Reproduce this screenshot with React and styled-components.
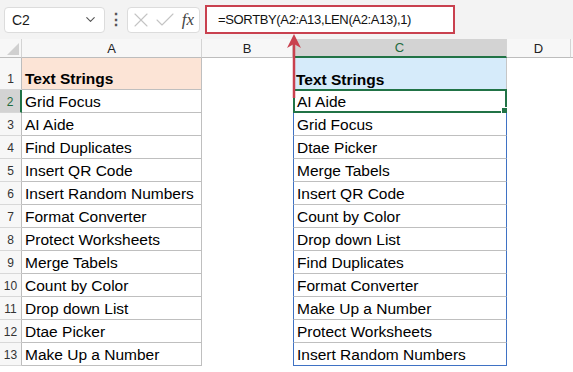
import styled, { createGlobalStyle } from 'styled-components';
import { ChevronDown, X, Check } from 'lucide-react';

const GlobalStyle = createGlobalStyle`
  html, body {
    margin: 0;
    padding: 0;
    background: #ffffff;
    font-family: 'Liberation Sans', Arial, sans-serif;
  }
  * { box-sizing: border-box; }
`;

const Page = styled.div`
  position: relative;
  width: 573px;
  height: 372px;
  overflow: hidden;
  background: #ffffff;
`;

const Toolbar = styled.div`
  display: flex;
  align-items: center;
  height: 39px;
  padding-left: 4px;
  background: #f3f3f3;
`;

const NameBox = styled.div`
  display: flex;
  align-items: center;
  justify-content: space-between;
  width: 101px;
  height: 26px;
  padding: 0 6px 0 7px;
  background: #ffffff;
  border: 1px solid #dcdcdc;
  border-radius: 4px;
  font-size: 14px;
  color: #1a1a1a;
`;

const Dots = styled.div`
  width: 22px;
  text-align: center;
  font-size: 16px;
  font-weight: 700;
  color: #555;
`;

const FxBox = styled.div`
  display: flex;
  align-items: center;
  gap: 0;
  width: 73px;
  height: 26px;
  padding: 0 5px 0 1px;
  background: #ffffff;
  border: 1px solid #dcdcdc;
  border-radius: 4px;
`;

const Fx = styled.span`
  margin-left: auto;
  font-family: 'Liberation Serif', serif;
  font-style: italic;
  font-size: 17px;
  color: #444;
`;

const FormulaBox = styled.div`
  display: flex;
  align-items: center;
  width: 250px;
  height: 29px;
  margin-left: 5px;
  padding-left: 11px;
  background: #ffffff;
  border: 2px solid #c9414f;
  font-size: 13px;
  letter-spacing: -0.35px;
  color: #111;
`;

const Sheet = styled.div`
  display: grid;
  grid-template-columns: 22px 180px 91px 214px 64px 1fr;
  grid-template-rows: 19px 32px repeat(13, 23px);
`;

const Corner = styled.div`
  position: relative;
  background: #f7f7f7;
  border-right: 1px solid #d4d4d4;
  border-bottom: 1px solid #bdbdbd;
  &::after {
    content: '';
    position: absolute;
    right: 2px;
    bottom: 2px;
    border-left: 12px solid transparent;
    border-bottom: 12px solid #d0d0d0;
  }
`;

const ColHead = styled.div`
  display: flex;
  align-items: center;
  justify-content: center;
  font-size: 13px;
  background: ${p => (p.$active ? '#d3d3d3' : '#f7f7f7')};
  color: ${p => (p.$active ? '#1e6b3e' : '#222')};
  border-right: 1px solid #d4d4d4;
  border-bottom: ${p => (p.$active ? '2px solid #217346' : '1px solid #bdbdbd')};
`;

const RowHead = styled.div`
  display: flex;
  align-items: flex-end;
  justify-content: center;
  padding-bottom: 3px;
  font-size: 12px;
  background: ${p => (p.$active ? '#d3d3d3' : '#f7f7f7')};
  color: ${p => (p.$active ? '#1e6b3e' : '#333')};
  border-bottom: 1px solid #d8d8d8;
  border-right: ${p => (p.$active ? '2px solid #217346' : '1px solid #bdbdbd')};
`;

const Cell = styled.div`
  position: relative;
  display: flex;
  align-items: flex-end;
  padding: 0 0 1px 3px;
  font-size: 15.5px;
  font-weight: ${p => (p.$bold ? 700 : 400)};
  color: #000;
  white-space: nowrap;
  background: ${p => p.$fill || '#ffffff'};
  border-right: ${p => p.$right || 'none'};
  border-bottom: ${p => p.$bottom || 'none'};
  border-left: ${p => p.$left || 'none'};
`;

const Selection = styled.div`
  position: absolute;
  inset: -1px -1px -1px -1px;
  border: 2px solid #217346;
  pointer-events: none;
  &::after {
    content: '';
    position: absolute;
    right: -4px;
    bottom: -4px;
    width: 6px;
    height: 6px;
    background: #217346;
    border: 1px solid #ffffff;
  }
`;

const Arrow = styled.svg`
  position: absolute;
  left: 286px;
  top: 32px;
`;

const listA = [
  'Grid Focus', 'AI Aide', 'Find Duplicates', 'Insert QR Code', 'Insert Random Numbers',
  'Format Converter', 'Protect Worksheets', 'Merge Tabels', 'Count by Color',
  'Drop down List', 'Dtae Picker', 'Make Up a Number',
];

const listC = [
  'AI Aide', 'Grid Focus', 'Dtae Picker', 'Merge Tabels', 'Insert QR Code', 'Count by Color',
  'Drop down List', 'Find Duplicates', 'Format Converter', 'Make Up a Number',
  'Protect Worksheets', 'Insert Random Numbers',
];

const GRAY = '1px solid #bfbfbf';
const BLUE = '1px solid #3f72c4';

export default function App() {
  return (
    <Page>
      <GlobalStyle />
      <Toolbar>
        <NameBox>
          C2
          <ChevronDown size={15} color="#555" strokeWidth={1.8} />
        </NameBox>
        <Dots>⋮</Dots>
        <FxBox>
          <X size={24} color="#c4c4c4" strokeWidth={1.1} />
          <Check size={24} color="#c4c4c4" strokeWidth={1.1} />
          <Fx>fx</Fx>
        </FxBox>
        <FormulaBox>=SORTBY(A2:A13,LEN(A2:A13),1)</FormulaBox>
      </Toolbar>

      <Sheet>
        <Corner />
        <ColHead>A</ColHead>
        <ColHead>B</ColHead>
        <ColHead $active>C</ColHead>
        <ColHead>D</ColHead>
        <ColHead />

        <RowHead>1</RowHead>
        <Cell $bold $fill="#fce4d6" $right={GRAY} $bottom={GRAY}>Text Strings</Cell>
        <Cell />
        <Cell $bold $fill="#d6ebfa" $right="1px solid #c6c6c6">Text Strings</Cell>
        <Cell />
        <Cell />

        {listA.map((a, i) => {
          const last = i === listA.length - 1;
          return [
            <RowHead key={`h${i}`} $active={i === 0}>{i + 2}</RowHead>,
            <Cell key={`a${i}`} $right={GRAY} $bottom={GRAY}>{a}</Cell>,
            <Cell key={`b${i}`} />,
            <Cell
              key={`c${i}`}
              $left={BLUE}
              $right={BLUE}
              $bottom={last ? BLUE : GRAY}
            >
              {listC[i]}
              {i === 0 && <Selection />}
            </Cell>,
            <Cell key={`d${i}`} />,
            <Cell key={`e${i}`} />,
          ];
        })}
      </Sheet>

      <Arrow width="16" height="68" viewBox="0 0 16 68">
        <line x1="8" y1="10" x2="8" y2="66" stroke="#c9414f" strokeWidth="2.5" />
        <polygon points="8,2 1,16 8,12 15,16" fill="#c9414f" />
      </Arrow>
    </Page>
  );
}
